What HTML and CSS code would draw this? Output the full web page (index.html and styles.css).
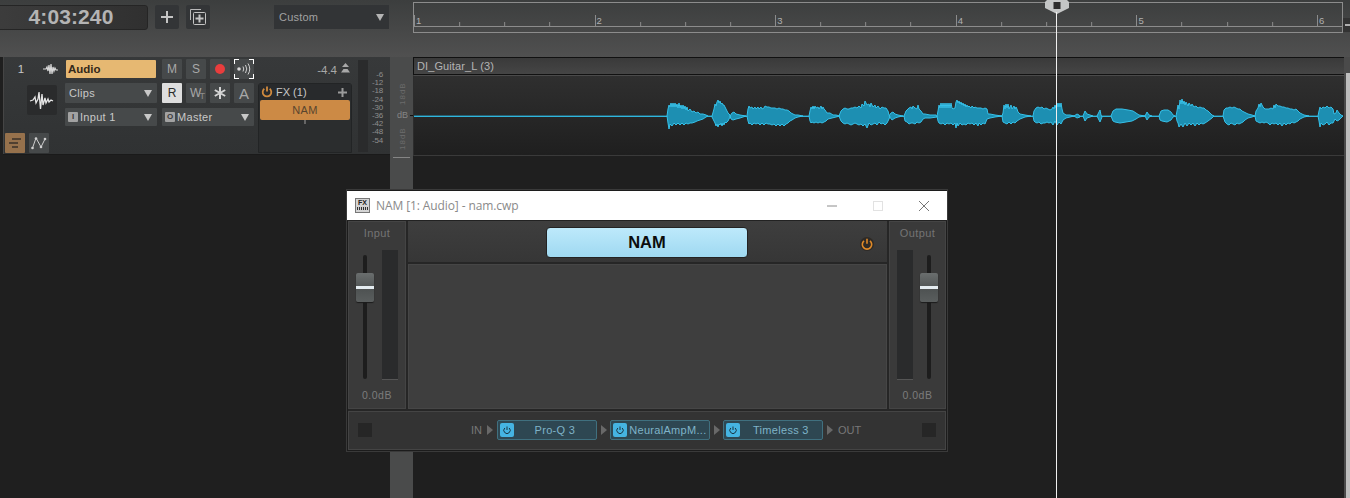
FILE: index.html
```html
<!DOCTYPE html>
<html lang="en">
<head>
<meta charset="utf-8">
<title>NAM</title>
<link rel="stylesheet" href="styles.css">
</head>
<body>
<div class="app">
  <header class="topbar">
    <div class="tools">
      <div class="time">4:03:240</div>
      <button class="tool-btn"><svg width="16" height="16" viewBox="0 0 16 16"><path d="M8 2v12M2 8h12" stroke="#c4c4c4" stroke-width="2"/></svg></button>
      <button class="tool-btn"><svg width="18" height="18" viewBox="0 0 18 18" fill="none"><path d="M12 1.500H1.500V12" stroke="#b8b8b8"/><rect x="4.500" y="4.500" width="12" height="12" rx="1" stroke="#c4c4c4"/><path d="M10.500 6.500v8M6.500 10.500h8" stroke="#c4c4c4" stroke-width="2"/></svg></button>
      <div class="custom"><span>Custom</span><i class="arrow"></i></div>
    </div>
    <div class="ruler">
      <div class="measure"><span class="num">1</span><i class="beat"></i><i class="beat"></i><i class="beat"></i></div>
      <div class="measure"><span class="num">2</span><i class="beat"></i><i class="beat"></i><i class="beat"></i></div>
      <div class="measure"><span class="num">3</span><i class="beat"></i><i class="beat"></i><i class="beat"></i></div>
      <div class="measure"><span class="num">4</span><i class="beat"></i><i class="beat"></i><i class="beat"></i></div>
      <div class="measure"><span class="num">5</span><i class="beat"></i><i class="beat"></i><i class="beat"></i></div>
      <div class="measure last"><span class="num">6</span></div>
    </div>
    <div class="zoomer"><i></i></div>
  </header>

  <main class="workspace">
    <section class="tracks">
      <div class="track">
        <div class="c-id">
          <div class="id-row">
            <span class="tnum">1</span>
            <svg class="tiny-wave" width="16" height="14" viewBox="0 0 16 14" fill="none"><path d="M0 7h3l1-2 1 4 1-6 1 9 1-10 1 10 1-7 1 4 1-3 1 2h2" stroke="#d8d8d8" stroke-width="1.200"/></svg>
          </div>
          <div class="big-wave"><svg width="26" height="24" viewBox="0 0 26 24" fill="none"><path d="M1 13l3-1 2-3 1 6 2-4 1-7 1.500 17L13 6l1 11 2-7 1 5 2-4 1 3 2-2 2 1" stroke="#e6e6e6" stroke-width="1.300"/></svg></div>
          <div class="mode-row">
            <button class="sq mode-on"><svg width="14" height="12" viewBox="0 0 14 12"><path d="M4 2h9M1 6h9M4 10h6" stroke="#3a3028" stroke-width="1.500"/></svg></button>
            <button class="sq"><svg width="16" height="14" viewBox="0 0 16 14" fill="none"><path d="M1.500 12L5 2l5 9 4-8" stroke="#d0d0d0"/><circle cx="5" cy="2.500" r="1.300" fill="#d0d0d0"/><circle cx="10" cy="11" r="1.300" fill="#d0d0d0"/><circle cx="1.500" cy="12" r="1.300" fill="#d0d0d0"/><circle cx="14" cy="3" r="1.300" fill="#d0d0d0"/></svg></button>
          </div>
        </div>

        <div class="c-name">
          <div class="name">Audio</div>
          <div class="drop clips-drop"><span>Clips</span><i class="arrow"></i></div>
          <div class="drop io"><b class="io-tag">I</b><span>Input 1</span><i class="arrow"></i></div>
        </div>

        <div class="c-btns">
          <div class="btn-row top">
            <button class="sq">M</button>
            <button class="sq">S</button>
            <button class="sq"><i class="rec"></i></button>
            <button class="sq mon">
              <svg width="16" height="12" viewBox="0 0 16 12" fill="none"><circle cx="3" cy="6" r="1.800" fill="#d8d8d8"/><path d="M7 3.500q1.500 2.500 0 5M9.500 2q2.500 4 0 8M12 .5q3.500 5.500 0 11" stroke="#d0d0d0"/></svg>
              <i class="corner tl"></i><i class="corner tr"></i><i class="corner bl"></i><i class="corner br"></i>
            </button>
          </div>
          <div class="btn-row">
            <button class="sq r-on">R</button>
            <button class="sq w">W<small>T</small></button>
            <button class="sq"><svg width="14" height="14" viewBox="0 0 14 14"><path d="M7 1v12M1.800 4l10.400 6M12.200 4L1.800 10" stroke="#d4d4d4" stroke-width="2"/></svg></button>
            <button class="sq big-a">A</button>
          </div>
          <div class="drop io"><b class="io-tag">O</b><span>Master</span><i class="arrow"></i></div>
        </div>

        <div class="c-fx">
          <div class="level"><span>-4.4</span><svg width="9" height="10" viewBox="0 0 9 10"><path d="M4.500 0L8 4H1zM2.500 6h4L9 9.500H0z" fill="#a8a8a8"/></svg></div>
          <div class="rack">
            <div class="rack-head">
              <svg class="pw" width="12" height="12" viewBox="0 0 12 12" fill="none"><path d="M3.300 2.800a4.300 4.300 0 1 0 5.400 0" stroke="#d08a3e" stroke-width="1.800"/><path d="M6 .5v5" stroke="#d08a3e" stroke-width="1.800"/></svg>
              <span class="fx-label">FX (1)</span>
              <svg class="add" width="9" height="9" viewBox="0 0 9 9"><path d="M4.500 0v9M0 4.500h9" stroke="#9a9a9a" stroke-width="2"/></svg>
            </div>
            <div class="bin">NAM</div>
            <i class="bin-tick"></i>
          </div>
        </div>

        <div class="c-meter">
          <div class="meter"></div>
          <div class="scale"><span>-6</span><span>-12</span><span>-18</span><span>-24</span><span>-30</span><span>-36</span><span>-42</span><span>-48</span><span>-54</span></div>
        </div>
      </div>
    </section>

    <aside class="splitter">
      <span class="vlabel up">18dB</span>
      <div class="db-row"><span>dB</span><i></i></div>
      <span class="vlabel down">18dB</span>
      <i class="split-line"></i>
    </aside>

    <section class="lane">
      <div class="clip-head">DI_Guitar_L (3)</div>
      <div class="clip-body">
        <svg class="wave" width="930" height="80" viewBox="414 75 930 80">
          <rect x="414" y="114.600" width="929" height="1.400" fill="#2fb6de"/>
          <path class="wf" d="M667 115L668 108 669 104 670 106 671 102 672 106 673 102 674 106 675 102 676 106 677 103 678 107 679 102 680 107 681 104 682 108 683 104 684 108 685 105 686 109 687 106 688 110 690 108 692 111 694 110 696 112 698 111 700 113 703 113 706 114 708 115 706 116 703 118 700 119 697 120 695 121 692 122 690 122 688 123 686 122 684 124 682 122 680 124 678 122 676 124 674 122 672 125 670 123 669 128 668 122Z
          M712 115L714 108 715 103 716 105 717 101 718 99 719 102 720 100 721 103 722 102 723 104 724 104 725 106 726 108 727 110 728 112 730 114 730 116 728 120 727 121 726 122 725 121 724 124 723 122 722 125 721 122 720 124 719 123 718 126 717 123 716 125 715 122 714 120 712 116Z
          M730 115L732 112 734 111 736 113 740 114 746 115 740 117 736 118 733 119 731 118Z
          M747 115L748 108 749 105 750 107 752 106 753 108 755 106 756 108 758 106 759 108 761 106 762 108 764 107 765 105 767 106 769 106 771 107 773 107 775 107 777 108 779 107 781 108 783 108 785 109 787 109 789 110 791 112 793 113 795 114 798 114 803 115 798 116 795 117 792 119 790 120 788 122 786 123 784 125 782 123 780 125 778 123 776 125 774 123 772 124 770 123 768 123 766 122 764 124 762 122 760 124 758 122 756 123 754 122 752 124 750 122 749 123 748 120Z
          M809 115L810 110 811 106 812 108 813 105 814 108 815 105 816 107 818 106 819 108 821 105 822 108 823 106 824 108 825 109 827 112 830 112 833 114 836 114 840 115 836 116 832 117 828 118 826 120 824 121 822 122 820 121 818 122 816 121 814 122 812 121 811 122 810 120Z
          M839 115L841 110 843 108 845 107 847 108 849 108 851 107 853 107 855 106 857 107 859 105 861 107 862 103 864 105 865 100 867 104 869 103 870 106 871 102 873 106 875 104 876 107 878 105 880 108 882 106 884 107 886 107 888 110 889 114 890 115 889 118 887 122 885 124 883 122 881 123 879 121 877 124 875 122 873 123 871 124 869 122 867 127 865 123 863 125 861 123 859 124 857 123 855 122 853 123 851 124 849 123 847 122 845 123 843 122 841 120Z
          M889 115L891 112 893 111 895 113 898 114 903 115 898 116 895 117 892 119Z
          M904 115L906 110 908 108 909 107 911 106 912 108 913 105 915 107 917 108 918 104 919 108 921 110 923 113 925 113 930 114 936 114 937 116 930 117 925 117 923 118 921 121 919 122 917 121 915 123 913 122 911 122 909 123 907 121 905 120Z
          M937 115L938 110 939 104 940 107 941 102 942 107 943 102 944 107 945 102 946 107 947 102 948 107 949 102 950 107 951 102 952 107 953 108 955 107 956 101 957 99 958 102 959 100 960 103 961 101 962 104 963 102 964 105 965 103 966 106 967 104 968 106 969 105 971 107 972 105 974 107 975 106 977 107 979 107 981 107 983 108 985 107 987 108 988 113 990 113 995 114 1002 115 995 116 990 117 987 118 985 123 983 122 981 124 979 122 978 125 976 122 974 124 972 122 970 123 968 122 966 124 964 123 962 124 960 122 958 125 957 122 956 127 955 122 953 124 951 122 949 123 947 122 945 124 943 122 941 123 939 122 938 120Z
          M1002 115L1003 112 1004 104 1005 108 1006 103 1007 107 1008 103 1009 108 1011 104 1012 108 1014 105 1015 108 1016 106 1017 108 1018 111 1020 113 1025 114 1031 115 1025 116 1020 118 1017 120 1015 122 1013 121 1011 123 1009 121 1007 123 1005 122 1003 121Z
          M1033 115L1034 110 1036 107 1038 106 1040 107 1042 106 1044 108 1046 107 1048 108 1050 109 1052 108 1053 106 1054 108 1055 104 1056 107 1057 102 1058 106 1059 102 1060 106 1061 102 1062 108 1063 112 1066 114 1070 114 1074 115 1070 116 1066 117 1063 119 1061 123 1059 121 1057 124 1055 120 1053 124 1051 121 1049 122 1047 121 1045 122 1043 122 1041 123 1039 121 1037 122 1035 121 1034 120Z
          M1074 115L1077 113 1079 114 1080 116 1077 117Z
          M1083 115L1085 110 1087 113 1090 114 1093 115 1090 116 1087 117 1085 120Z
          M1097 115L1100 109 1101 114 1102 116 1100 121Z
          M1111 115L1113 110 1116 108 1122 108 1128 109 1133 110 1136 112 1139 114 1145 115 1139 116 1136 118 1132 120 1126 121 1120 122 1115 121 1113 120Z
          M1145 115L1147 111 1149 114 1152 115 1149 116 1147 119Z
          M1159 115L1161 110 1164 109 1168 109 1171 111 1173 114 1175 115 1173 116 1171 119 1167 121 1162 120 1160 119Z
          M1176 115L1177 110 1178 104 1179 108 1180 99 1181 103 1182 98 1183 103 1184 100 1185 104 1186 101 1188 105 1189 102 1191 105 1192 103 1194 106 1196 105 1198 107 1200 106 1202 107 1204 107 1206 109 1208 110 1210 112 1212 114 1214 115 1212 117 1208 120 1205 122 1203 123 1201 122 1199 124 1197 122 1195 125 1193 122 1191 124 1189 122 1187 125 1185 122 1183 126 1181 123 1179 126 1178 122 1177 120Z
          M1223 115L1224 109 1226 107 1228 107 1230 106 1232 107 1234 106 1236 107 1238 108 1240 108 1242 110 1244 111 1246 112 1248 113 1252 114 1255 115 1252 116 1248 117 1245 119 1243 121 1241 122 1239 123 1237 122 1235 124 1233 123 1231 122 1229 124 1227 123 1225 121Z
          M1255 115L1256 110 1258 107 1259 103 1260 106 1261 102 1263 106 1265 108 1267 108 1269 108 1271 107 1273 108 1274 104 1275 107 1276 103 1278 105 1280 105 1282 106 1284 106 1286 107 1288 107 1290 108 1292 108 1294 109 1296 108 1298 110 1300 112 1302 113 1304 114 1309 115 1304 116 1300 118 1298 120 1296 121 1294 122 1292 121 1290 123 1288 122 1286 124 1284 122 1282 125 1280 122 1278 124 1276 122 1274 123 1272 122 1270 124 1268 122 1266 121 1264 122 1262 121 1260 122 1258 121 1256 120Z
          M1318 115L1319 110 1320 106 1321 108 1323 106 1325 107 1327 105 1329 107 1331 106 1333 108 1334 113 1336 112 1337 109 1339 112 1341 114 1343 115 1341 117 1339 119 1337 120 1335 118 1333 122 1331 122 1329 124 1327 121 1325 123 1323 124 1321 122 1320 126 1319 120Z"/>
        </svg>
      </div>
      <div class="lane-below"></div>
    </section>
    <div class="vscroll"></div>
  </main>
</div>

<div class="playhead">
  <svg width="24" height="14" viewBox="0 0 24 14"><path d="M2 0h20l2 2v6l-12 6L0 8V2z" fill="#c4c6c6"/><rect x="8.500" y="2" width="7" height="7" fill="#2c2c2c"/></svg>
  <i></i>
</div>

<div class="window">
  <div class="titlebar">
    <div class="fx-icon"><span>FX</span><i></i></div>
    <span class="title">NAM [1: Audio] - nam.cwp</span>
    <div class="win-btns">
      <svg width="12" height="12" viewBox="0 0 12 12"><path d="M1 6h10" stroke="#8c8c8c"/></svg>
      <svg width="12" height="12" viewBox="0 0 12 12"><rect x="1.500" y="1.500" width="9" height="9" fill="none" stroke="#e2e2e2"/></svg>
      <svg width="12" height="12" viewBox="0 0 12 12"><path d="M1 1l10 10M11 1L1 11" stroke="#777"/></svg>
    </div>
  </div>
  <div class="win-body">
    <div class="strip">
      <span class="strip-label">Input</span>
      <div class="strip-mid">
        <div class="fader"><i class="slot"></i><i class="handle"></i></div>
        <div class="strip-meter"></div>
      </div>
      <span class="strip-value">0.0dB</span>
    </div>
    <div class="centre">
      <div class="centre-head">
        <button class="nam-btn">NAM</button>
        <svg class="nam-pw" width="14" height="14" viewBox="0 0 14 14" fill="none"><circle cx="7" cy="7" r="7" fill="#2e2a26"/><path d="M4 3.800a4.700 4.700 0 1 0 6 0" stroke="#e08a28" stroke-width="1.600"/><path d="M7 1.800v5" stroke="#e08a28" stroke-width="1.600"/></svg>
      </div>
      <div class="centre-body"></div>
    </div>
    <div class="strip out">
      <span class="strip-label">Output</span>
      <div class="strip-mid">
        <div class="strip-meter"></div>
        <div class="fader"><i class="slot"></i><i class="handle"></i></div>
      </div>
      <span class="strip-value">0.0dB</span>
    </div>
  </div>
  <div class="chain">
    <i class="chain-sq"></i>
    <div class="chain-mid">
      <span class="chain-io">IN</span><i class="tri first"></i>
      <div class="chip"><i class="chip-pw"><svg width="10" height="10" viewBox="0 0 10 10" fill="none"><path d="M2.800 3a3.200 3.200 0 1 0 4.400 0M5 1.500v3.500" stroke="#1a3644" stroke-width="1"/></svg></i><span>Pro-Q 3</span></div><i class="tri"></i>
      <div class="chip"><i class="chip-pw"><svg width="10" height="10" viewBox="0 0 10 10" fill="none"><path d="M2.800 3a3.200 3.200 0 1 0 4.400 0M5 1.500v3.500" stroke="#1a3644" stroke-width="1"/></svg></i><span>NeuralAmpM...</span></div><i class="tri"></i>
      <div class="chip"><i class="chip-pw"><svg width="10" height="10" viewBox="0 0 10 10" fill="none"><path d="M2.800 3a3.200 3.200 0 1 0 4.400 0M5 1.500v3.500" stroke="#1a3644" stroke-width="1"/></svg></i><span>Timeless 3</span></div><i class="tri last"></i>
      <span class="chain-io">OUT</span>
    </div>
    <i class="chain-sq"></i>
  </div>
</div>
</body>
</html>
```

FILE: styles.css
```css
* { box-sizing: border-box; }
html, body { margin: 0; padding: 0; }
body {
  width: 1350px;
  height: 498px;
  overflow: hidden;
  background: #1f1f1f;
  font-family: "Liberation Sans", Arial, sans-serif;
  font-size: 11px;
  color: #b0b0b0;
  position: relative;
}
button { font: inherit; padding: 0; border: 0; color: inherit; }
i { display: block; font-style: normal; }
.app { display: flex; flex-direction: column; height: 498px; }

/* top bar */
.topbar {
  height: 57px;
  display: flex;
  align-items: flex-start;
  background: linear-gradient(#3c3e3e, #505050);
}
.tools { width: 413px; flex: none; display: flex; align-items: flex-start; padding-top: 5px; }
.time {
  width: 157px;
  height: 25px;
  margin-left: -9px;
  padding: 0 6px 0 9px;
  border: 1px solid #252525;
  border-radius: 3px;
  background: linear-gradient(90deg, #3d3d3d, #303030);
  color: #b4b4b4;
  font-size: 21px;
  font-weight: bold;
  line-height: 22px;
  text-align: center;
  letter-spacing: .1px;
}
.tool-btn {
  width: 24px;
  height: 24px;
  margin-left: 7px;
  background: #333537;
  border-radius: 2px;
  display: flex;
  align-items: center;
  justify-content: center;
}
.custom {
  width: 115px;
  height: 24px;
  margin-left: 64px;
  padding: 0 5px;
  background: #323436;
  display: flex;
  align-items: center;
  justify-content: space-between;
  color: #a2a2a2;
  letter-spacing: .2px;
}
.arrow {
  width: 0;
  height: 0;
  border-left: 4px solid transparent;
  border-right: 4px solid transparent;
  border-top: 7px solid #b4b4b4;
}
.ruler {
  width: 930px;
  flex: none;
  height: 31px;
  margin-top: 2px;
  border: 1px solid #8c8c8c;
  display: flex;
  position: relative;
}
.ruler::after {
  content: "";
  position: absolute;
  left: 0; right: 0; top: 23px;
  height: 1px;
  background: #8c8c8c;
}
.measure {
  width: 180.6px;
  flex: none;
  height: 23px;
  display: flex;
  align-items: flex-end;
  position: relative;
}
.measure::before {
  content: "";
  position: absolute;
  left: 0; bottom: 0;
  width: 1px; height: 11px;
  background: #8c8c8c;
}
.num {
  position: absolute;
  left: 2px; top: 13px;
  font-size: 9.5px;
  line-height: 10px;
  color: #b0b0b0;
}
.beat {
  flex: none;
  width: 45.15px;
  height: 4px;
  transform: translateX(45.15px);
  border-left: 1px solid #8c8c8c;
}
.measure.last { width: 25px; }
.zoomer {
  width: 7px;
  height: 14px;
  margin-top: 18px;
  background: #333;
  display: flex;
  align-items: center;
  padding-left: 2px;
}
.zoomer i { width: 5px; height: 2px; background: #b0b0b0; }

/* workspace */
.workspace { flex: 1; display: flex; min-height: 0; }
.tracks { width: 390px; flex: none; background: #1f1f1f; }
.track {
  height: 98px;
  margin-left: 3px;
  padding-top: 2px;
  display: flex;
  background: linear-gradient(#37393a, #303233);
  border-bottom: 1px solid #1a1a1a;
  box-shadow: inset 1px 0 0 #454545;
}
.c-id { width: 62px; flex: none; display: flex; flex-direction: column; }
.id-row { height: 20px; display: flex; align-items: center; }
.tnum { width: 18px; margin-left: 9px; font-size: 11.5px; color: #c8c8c8; text-align: center; }
.tiny-wave { margin-left: 13px; }
.big-wave {
  width: 30px;
  height: 30px;
  margin: 6px 0 0 24px;
  background: #2a2b2c;
  border-radius: 2px;
  display: flex;
  align-items: center;
  justify-content: center;
}
.mode-row { display: flex; gap: 4px; margin: 18px 0 0 2px; }
.sq {
  width: 20px;
  height: 20px;
  background: #46494a;
  border-radius: 1px;
  display: flex;
  align-items: center;
  justify-content: center;
  color: #a8a8a8;
  font-size: 12px;
  position: relative;
}
.mode-on { background: #96714c; }
.c-name { width: 92px; flex: none; margin-right: 5px; padding-top: 1px; display: flex; flex-direction: column; }
.name {
  height: 18px;
  margin: 0 1px;
  padding-left: 2px;
  background: #e6b872;
  border-radius: 1px;
  color: #33291b;
  font-weight: bold;
  font-size: 11.5px;
  line-height: 18px;
}
.drop {
  background: #46494a;
  display: flex;
  align-items: center;
  padding: 0 4px 0 3px;
  color: #c8c8c8;
  border-radius: 1px;
}
.drop span { flex: 1; letter-spacing: .3px; }
.drop .arrow { border-top-color: #c8c8c8; margin-right: 1px; }
.clips-drop { height: 20px; margin-top: 5px; padding-left: 4px; }
.io { height: 18px; margin-top: 5px; }
.io-tag {
  width: 10px;
  height: 10px;
  margin-right: 2px;
  background: #a2a2a2;
  color: #3a3a3a;
  font-size: 8px;
  line-height: 10px;
  text-align: center;
  border-radius: 1px;
}
.c-btns { width: 92px; flex: none; margin-right: 4px; display: flex; flex-direction: column; }
.btn-row { display: flex; gap: 4px; }
.btn-row.top { margin-bottom: 4px; }
.rec { width: 10px; height: 10px; border-radius: 50%; background: #e83d3d; }
.corner { position: absolute; width: 5px; height: 5px; border: 0 solid #fff; }
.tl { left: 0; top: 0; border-width: 1px 0 0 1px; }
.tr { right: 0; top: 0; border-width: 1px 1px 0 0; }
.bl { left: 0; bottom: 0; border-width: 0 0 1px 1px; }
.br { right: 0; bottom: 0; border-width: 0 1px 1px 0; }
.r-on { background: #dedede; color: #2a2a2a; }
.w small { font-size: 9px; margin: 5px -3px 0 -2px; color: #8e8e8e; }
.big-a { font-size: 15px; }
.c-fx { width: 94px; flex: none; margin-right: 6px; }
.level {
  height: 24px;
  display: flex;
  align-items: flex-start;
  justify-content: flex-end;
  gap: 4px;
  padding: 4px 2px 0 0;
  font-size: 11.5px;
  color: #a8a8a8;
}
.level span { line-height: 14px; }
.rack {
  height: 70px;
  background: #2b2d2e;
  border: 1px solid #222425;
  border-radius: 3px 3px 0 0;
  padding: 0 1px;
}
.rack-head { height: 16px; display: flex; align-items: center; margin: 0 -1px; padding: 0 4px 0 2px; background: #282a2c; }
.fx-label { flex: 1; margin-left: 3px; color: #c8c8c8; font-size: 11px; }
.bin {
  height: 20px;
  background: #cc8a45;
  border-radius: 2px;
  color: #59452e;
  font-size: 11px;
  line-height: 20px;
  text-align: center;
  letter-spacing: .3px;
}
.bin-tick { width: 2px; height: 4px; margin: 0 auto; background: #666; }
.c-meter { width: 26px; flex: none; display: flex; gap: 2px; padding-top: 1px; }
.meter { width: 10px; height: 92px; background: #2a2b2c; }
.scale {
  width: 13px;
  padding-top: 11px;
  display: flex;
  flex-direction: column;
  align-items: flex-end;
  font-size: 8px;
  line-height: 8.2px;
  color: #8e8e8e;
  letter-spacing: -.2px;
}
.splitter {
  width: 23px;
  flex: none;
  background: #4a4b4b;
  display: flex;
  flex-direction: column;
  align-items: flex-end;
  position: relative;
}
.vlabel {
  writing-mode: vertical-rl;
  transform: rotate(180deg);
  font-size: 8px;
  line-height: 9px;
  color: #6c6c6c;
  letter-spacing: 1px;
  height: 23px;
  margin-right: 6px;
}
.up { margin-top: 25px; }
.down { margin-top: 3px; }
.db-row { height: 18px; margin-top: 1px; display: flex; align-items: center; width: 20px; }
.db-row span { font-size: 9px; color: #858585; width: 17px; padding-left: 4px; }
.db-row i { width: 3px; height: 1px; background: #111; }
.split-line { position: absolute; left: 3px; right: 3px; top: 100px; height: 1px; background: #858585; }
.lane { flex: 1; min-width: 0; display: flex; flex-direction: column; }
.clip-head {
  height: 18px;
  padding-left: 3px;
  border: 1px solid #111;
  border-width: 1px 0 1px 1px;
  background: linear-gradient(#3a3a3a, #454545);
  color: #b4b4b4;
  font-size: 11px;
  line-height: 16px;
  letter-spacing: .1px;
}
.clip-body {
  height: 81px;
  border-left: 1px solid #2c2c2c;
  border-top: 1px solid #4a4a4a;
  border-bottom: 1px solid #3a3a3a;
  background: linear-gradient(#2f2f2f, #1f1f1f);
  overflow: hidden;
}
.wave { display: block; }
.wf { fill: #1d8fb2; stroke: #35c0e8; stroke-width: 1; }
.lane-below { flex: 1; background: #1f1f1f; }
.vscroll {
  width: 6px;
  flex: none;
  background: linear-gradient(#4a4a4a 16px, #bdbdbd 16px);
  border-left: 2px solid #4a4a4a;
}

/* playhead */
.playhead { position: absolute; left: 1045px; top: 0; width: 24px; height: 498px; }
.playhead svg { display: block; }
.playhead i { position: absolute; left: 11px; top: 12px; bottom: 0; width: 1px; background: #f0f0f0; }

/* plug-in window */
.window {
  position: absolute;
  left: 347px;
  top: 190px;
  width: 600px;
  height: 261px;
  background: #262626;
  border: 1px solid #1c1c1c;
  box-shadow: 0 0 0 1px #3a3a3a;
  display: flex;
  flex-direction: column;
}
.titlebar {
  height: 30px;
  flex: none;
  background: #fff;
  display: flex;
  align-items: center;
  padding-left: 7px;
  border-bottom: 1px solid #222;
  margin: 0 -1px;
}
.fx-icon {
  width: 15px;
  height: 15px;
  margin: 0 6px 0 1px;
  background: #d4d4d4;
  border: 1px solid #777;
  color: #222;
  font-size: 7px;
  font-weight: bold;
  line-height: 7px;
  text-align: center;
}
.fx-icon span { display: block; }
.fx-icon i { height: 3px; margin: 1px 1px 0; background: repeating-linear-gradient(90deg, #333 0 1px, #ccc 1px 2px); }
.title { flex: 1; font-family: "Open Sans", sans-serif; font-size: 12px; color: #8a8a8a; letter-spacing: -.1px; }
.win-btns { display: flex; gap: 34px; margin-right: 17px; align-items: center; }
.win-btns svg { display: block; }
.win-body { height: 188px; flex: none; display: flex; gap: 2px; }
.strip {
  width: 58px;
  flex: none;
  background: #3a3a3a;
  border: 1px solid #444;
  display: flex;
  flex-direction: column;
  align-items: center;
}
.strip.out { width: 57px; }
.strip-label { height: 28px; flex: none; padding-top: 4px; font-size: 11px; color: #747474; letter-spacing: .4px; line-height: 14px; }
.strip-mid { height: 132px; flex: none; width: 100%; display: flex; justify-content: space-between; padding: 0 7px; }
.fader { width: 18px; height: 130px; position: relative; }
.slot { position: absolute; left: 7px; top: 5px; width: 4px; height: 124px; background: #1d1d1d; border-radius: 2px; }
.handle {
  position: absolute;
  left: 0; top: 23px;
  width: 18px; height: 29px;
  border-radius: 2px;
  background: linear-gradient(#6a6e6e 0, #545858 45%, #e4ecf0 45%, #e4ecf0 55%, #4e5252 55%, #5a5e5e 100%);
  box-shadow: 0 1px 1px #1c1c1c;
}
.strip-meter { width: 16px; height: 130px; background: #2a2b2c; border-bottom: 1px solid #555; }
.strip-value { margin-top: 7px; font-size: 10.5px; color: #7c7c7c; letter-spacing: .5px; }
.centre { flex: 1; display: flex; flex-direction: column; gap: 2px; min-width: 0; }
.centre-head {
  height: 41px;
  flex: none;
  display: flex;
  align-items: flex-start;
  background: linear-gradient(#3e3e3e, #363636);
  padding: 6px 0 0 138px;
}
.nam-btn {
  width: 202px;
  height: 31px;
  flex: none;
  border: 1px solid #232323;
  border-radius: 4px;
  background: linear-gradient(#bde9fb, #9fd9f1);
  color: #0c0c0c;
  font-size: 16.5px;
  font-weight: bold;
}
.nam-pw { margin: 10px 0 0 112px; }
.centre-body { flex: 1; background: #3e3e3e; border: 1px solid #464646; }
.chain {
  flex: 1;
  margin-top: 2px;
  display: flex;
  align-items: center;
  justify-content: space-between;
  padding: 0 9px 2px;
  background: #333;
  border: 1px solid #444;
}
.chain-sq { width: 14px; height: 14px; flex: none; background: #262626; }
.chain-mid { display: flex; align-items: center; margin-left: 38px; }
.chain-io { font-size: 11px; color: #787878; }
.tri {
  width: 0; height: 0;
  flex: none;
  margin: 0 3px 0 4px;
  border-top: 5px solid transparent;
  border-bottom: 5px solid transparent;
  border-left: 6px solid #686868;
}
.tri.first { margin: 0 4px 0 5px; }
.tri.last { margin: 0 5px 0 4px; }
.chip {
  width: 100px;
  height: 20px;
  flex: none;
  background: #2e4752;
  border: 1px solid #40707f;
  border-radius: 2px;
  display: flex;
  align-items: center;
  padding-left: 2px;
  color: #7fb3c8;
  letter-spacing: .3px;
}
.chip span { flex: 1; text-align: center; white-space: nowrap; }
.chip-pw {
  width: 14px; height: 14px;
  flex: none;
  background: #45b4e2;
  border-radius: 2px;
  display: flex;
  align-items: center;
  justify-content: center;
}
```
